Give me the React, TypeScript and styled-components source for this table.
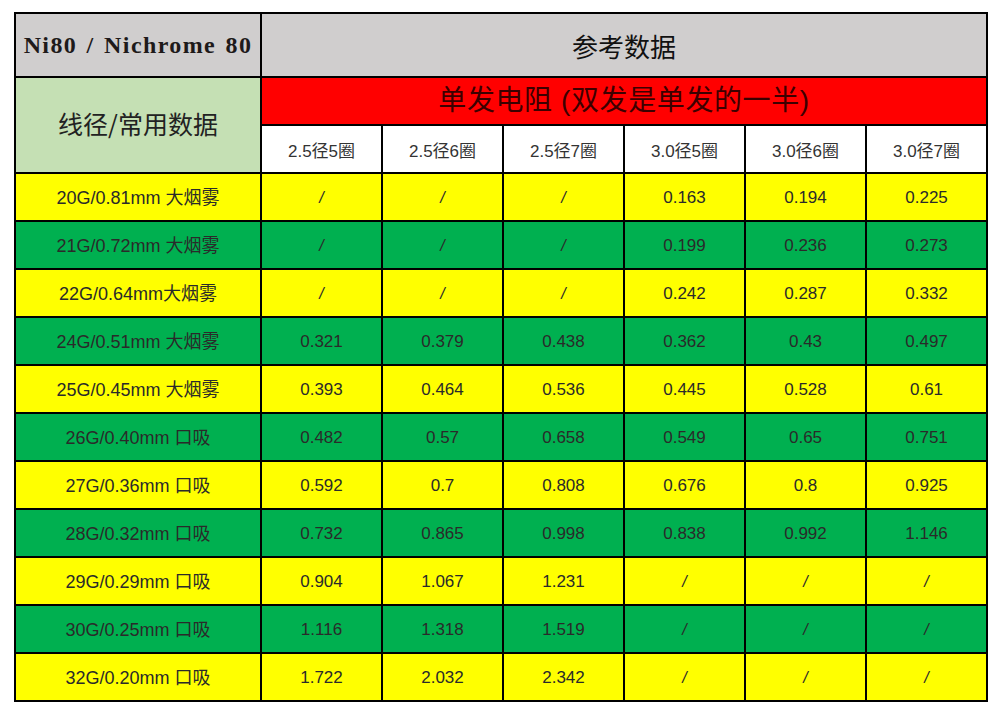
import React from 'react';
import styled, {createGlobalStyle} from 'styled-components';

////// Data //////
const coilHeads = ['2.5径5圈', '2.5径6圈', '2.5径7圈', '3.0径5圈', '3.0径6圈', '3.0径7圈'];

const rows: {wire: string, values: string[]}[] = [
  {wire: '20G/0.81mm 大烟雾', values: ['/', '/', '/', '0.163', '0.194', '0.225']},
  {wire: '21G/0.72mm 大烟雾', values: ['/', '/', '/', '0.199', '0.236', '0.273']},
  {wire: '22G/0.64mm大烟雾', values: ['/', '/', '/', '0.242', '0.287', '0.332']},
  {wire: '24G/0.51mm 大烟雾', values: ['0.321', '0.379', '0.438', '0.362', '0.43', '0.497']},
  {wire: '25G/0.45mm 大烟雾', values: ['0.393', '0.464', '0.536', '0.445', '0.528', '0.61']},
  {wire: '26G/0.40mm 口吸', values: ['0.482', '0.57', '0.658', '0.549', '0.65', '0.751']},
  {wire: '27G/0.36mm 口吸', values: ['0.592', '0.7', '0.808', '0.676', '0.8', '0.925']},
  {wire: '28G/0.32mm 口吸', values: ['0.732', '0.865', '0.998', '0.838', '0.992', '1.146']},
  {wire: '29G/0.29mm 口吸', values: ['0.904', '1.067', '1.231', '/', '/', '/']},
  {wire: '30G/0.25mm 口吸', values: ['1.116', '1.318', '1.519', '/', '/', '/']},
  {wire: '32G/0.20mm 口吸', values: ['1.722', '2.032', '2.342', '/', '/', '/']},
];

////// Component //////
export default function App() {
  return (
    <>
      <GlobalStyle />
      <Page>
        <Sheet>
          <colgroup>
            <col style={{width: 246}} />
            {coilHeads.map(h => <col key={h} style={{width: 121}} />)}
          </colgroup>
          <tbody>
            <tr>
              <TitleCell>Ni80 / Nichrome 80</TitleCell>
              <RefCell colSpan={6}>参考数据</RefCell>
            </tr>
            <tr>
              <WireHeadCell rowSpan={2}>线径/常用数据</WireHeadCell>
              <ResistCell colSpan={6}>单发电阻 (双发是单发的一半)</ResistCell>
            </tr>
            <tr>
              {coilHeads.map(h => <CoilCell key={h}>{h}</CoilCell>)}
            </tr>
            {rows.map((r, i) => (
              <tr key={r.wire}>
                <WireCell $tone={i % 2 ? 'green' : 'yellow'}>{r.wire}</WireCell>
                {r.values.map((v, j) => (
                  <DataCell key={j} $tone={i % 2 ? 'green' : 'yellow'} $slash={v === '/'}>{v}</DataCell>
                ))}
              </tr>
            ))}
          </tbody>
        </Sheet>
      </Page>
    </>
  );
}

////// Styles //////
const GlobalStyle = createGlobalStyle`
  html, body {
    margin: 0;
    padding: 0;
    background: #ffffff;
  }
  body {
    font-family: "Liberation Sans", Arial, "Noto Sans CJK SC", sans-serif;
  }
`;

const Page = styled.div`
  width: 1000px;
  height: 712px;
  padding: 12px 0 0 14px;
  box-sizing: border-box;
`;

const Sheet = styled.table`
  border-collapse: collapse;
  table-layout: fixed;
  width: 972px;

  td {
    border: 2px solid #000;
    padding: 0;
    text-align: center;
    vertical-align: middle;
    white-space: nowrap;
    overflow: hidden;
  }
`;

const TitleCell = styled.td`
  height: 62px;
  background: #d0cece;
  color: #1e1a1a;
  font-family: "Liberation Serif", "Times New Roman", serif;
  font-weight: bold;
  font-size: 24px;
  letter-spacing: 1.4px;
  word-spacing: 2px;
`;

const RefCell = styled.td`
  background: #d0cece;
  color: #111;
  font-family: "Noto Sans CJK SC", sans-serif;
  font-size: 26px;
`;

const WireHeadCell = styled.td`
  background: #c5e0b4;
  color: #222;
  font-family: "Noto Sans CJK SC", sans-serif;
  font-size: 25px;
  padding-bottom: 4px !important;
`;

const ResistCell = styled.td`
  height: 46px;
  background: #ff0000;
  color: #3c0000;
  font-family: "Liberation Sans", "Noto Sans CJK SC", sans-serif;
  font-size: 28px;
  letter-spacing: 0.6px;
  line-height: 1;
`;

const CoilCell = styled.td`
  height: 46px;
  background: #ffffff;
  color: #333;
  font-size: 17px;
  font-family: "Liberation Sans", "Noto Sans CJK SC", sans-serif;
`;

const DataCell = styled.td<{$tone: 'yellow' | 'green', $slash?: boolean}>`
  height: 44px;
  padding-top: 2px !important;
  line-height: 20px;
  background: ${p => p.$tone === 'yellow' ? '#ffff00' : '#00b050'};
  color: #2a2a2a;
  font-size: ${p => p.$slash ? '16px' : '17px'};
  font-style: ${p => p.$slash ? 'italic' : 'normal'};
  font-family: "Liberation Sans", "Noto Sans CJK SC", sans-serif;
`;

const WireCell = styled(DataCell)`
  font-size: 18px;
`;
